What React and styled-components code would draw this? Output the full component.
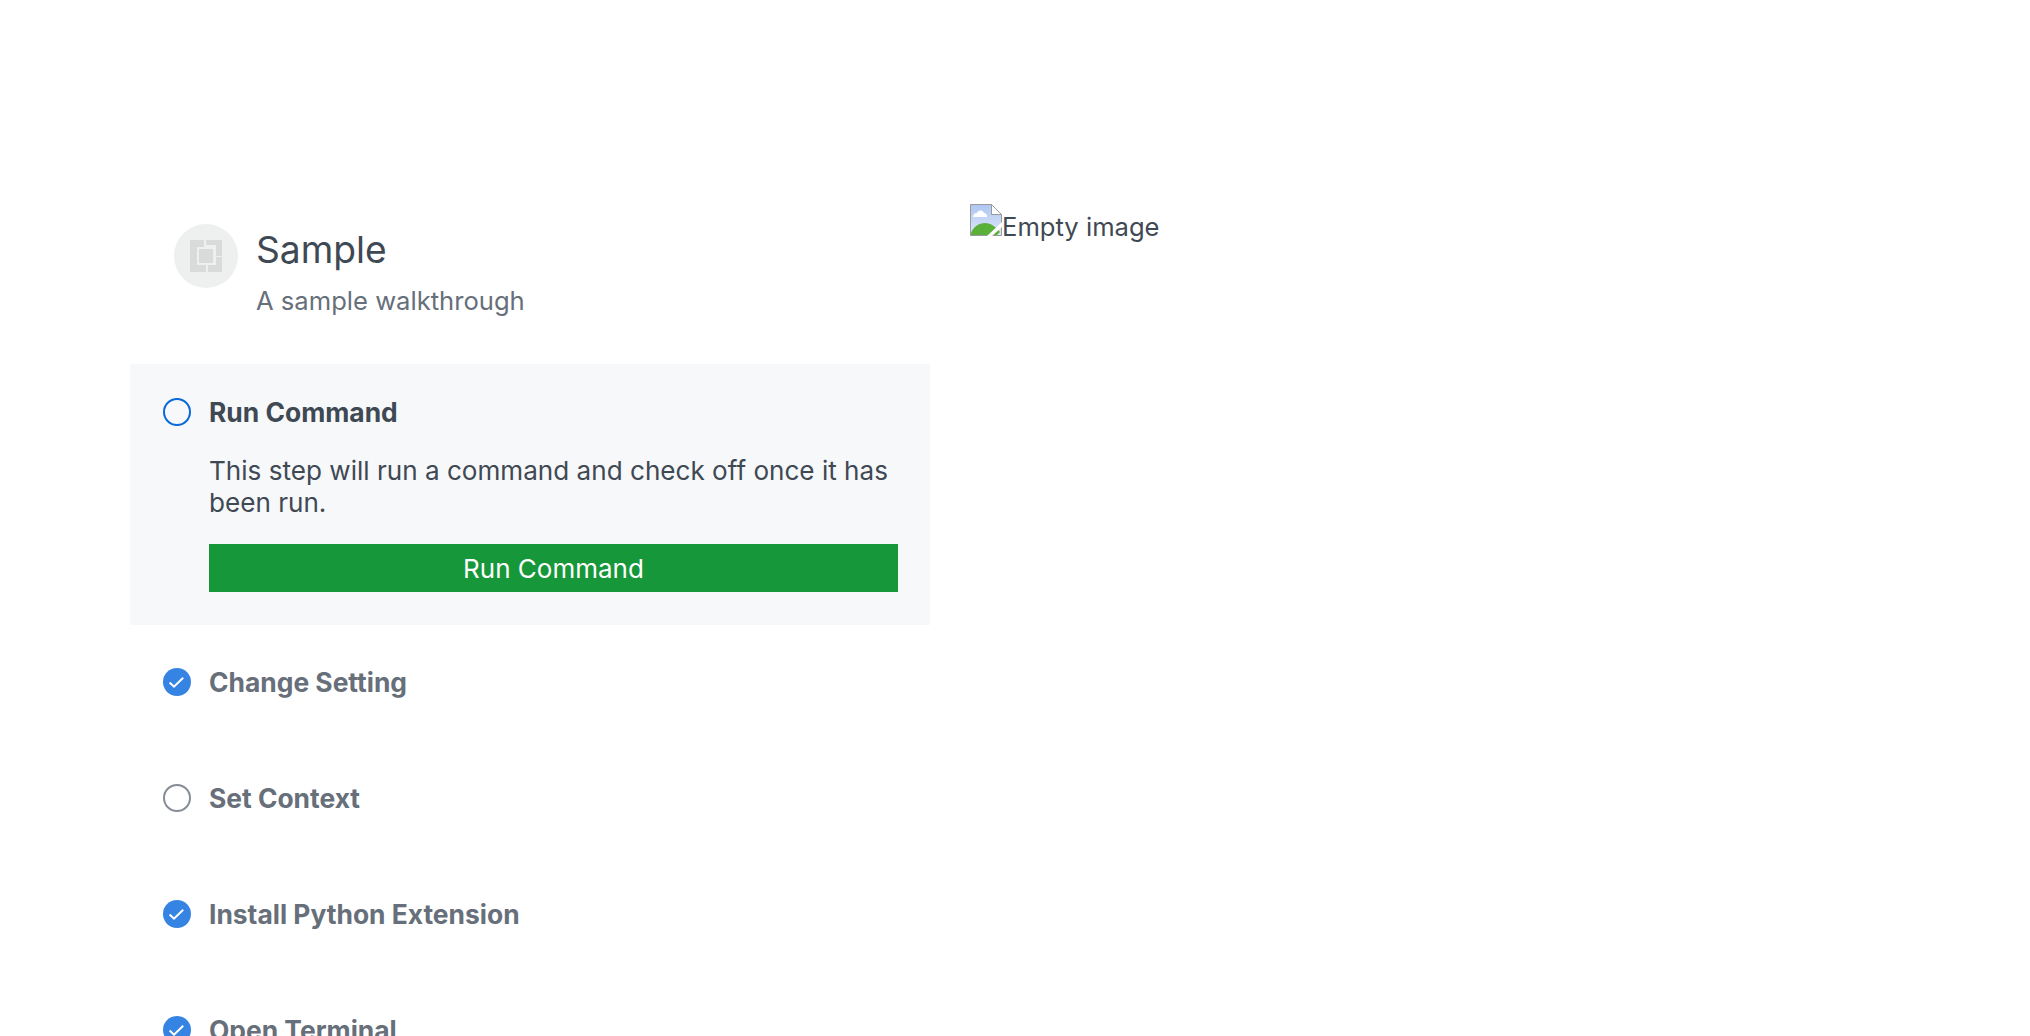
import styled, { createGlobalStyle } from "styled-components";

const GlobalStyle = createGlobalStyle`
  html, body {
    margin: 0;
    padding: 0;
    height: 100%;
    overflow: hidden;
    background: #ffffff;
  }
  body {
    font-family: Inter, "Liberation Sans", sans-serif;
    color: #3f4954;
  }
`;

const Page = styled.div`
  display: flex;
  align-items: flex-start;
  gap: 40px;
  width: 2030px;
  height: 1036px;
  padding: 204px 0 0 130px;
  box-sizing: border-box;
  overflow: hidden;
`;

const Sidebar = styled.div`
  display: flex;
  flex-direction: column;
  flex: none;
  width: 800px;
`;

const Header = styled.div`
  display: flex;
  flex: none;
  gap: 18px;
  padding: 20px 0 0 44px;
  height: 160px;
  box-sizing: border-box;
`;

const LogoCircle = styled.div`
  display: flex;
  align-items: center;
  justify-content: center;
  flex: none;
  width: 64px;
  height: 64px;
  border-radius: 50%;
  background: #eeefef;
`;

const HeaderText = styled.div`
  display: flex;
  flex-direction: column;
`;

const Title = styled.div`
  font-size: 37.2px;
  line-height: 46px;
  margin-top: 3px;
  color: #3f4954;
`;

const Subtitle = styled.div`
  font-size: 25.6px;
  line-height: 32px;
  margin-top: 12px;
  color: #666f7a;
`;

const Step = styled.div`
  display: flex;
  flex-direction: column;
  flex: none;
  padding: ${(p) => (p.$active ? "32px 32px 33px 33px" : "41px 32px 43px 33px")};
  background: ${(p) => (p.$active ? "#f7f8fa" : "transparent")};
`;

const StepHead = styled.div`
  display: flex;
  align-items: center;
  gap: 18px;
  height: 32px;
  margin-bottom: ${(p) => (p.$active ? "27px" : "0")};
`;

const StepTitle = styled.div`
  font-size: 26.4px;
  font-weight: 700;
  line-height: 32px;
  color: ${(p) => (p.$active ? "#3f4954" : "#666f7a")};
`;

const StepBody = styled.div`
  padding-left: 46px;
`;

const Description = styled.div`
  font-size: 26.1px;
  line-height: 32px;
  color: #3f4954;
`;

const RunButton = styled.button`
  display: block;
  width: 689px;
  height: 48px;
  margin-top: 25px;
  padding: 0;
  border: 0;
  background: #16973a;
  color: #ffffff;
  font-family: inherit;
  font-size: 26px;
`;

const Preview = styled.div`
  font-size: 25.6px;
  line-height: 32px;
  color: #3f4954;
  white-space: nowrap;

  svg {
    vertical-align: baseline;
  }
`;

const steps = [
  { title: "Change Setting", done: true },
  { title: "Set Context", done: false },
  { title: "Install Python Extension", done: true },
  { title: "Open Terminal", done: true },
];

function StepIcon({ done, active }) {
  if (done) {
    return (
      <svg width="28" height="28" viewBox="0 0 28 28" style={{ flex: "none" }}>
        <circle cx="14" cy="14" r="14" fill="#3584e4" />
        <path d="M6.6 14.6l4.4 4.1 9.2-9" fill="none" stroke="#fff" strokeWidth="2" />
      </svg>
    );
  }
  return (
    <svg width="28" height="28" viewBox="0 0 28 28" style={{ flex: "none" }}>
      <circle
        cx="14"
        cy="14"
        r="13"
        fill="none"
        stroke={active ? "#0969da" : "#868c96"}
        strokeWidth="2"
      />
    </svg>
  );
}

function LogoIcon() {
  return (
    <svg width="32" height="32" viewBox="0 0 32 32">
      <path
        fill="#d9dbdb"
        d="M0 0h14v7H7v18h9v7H0zM16 0h16v16h-6V5H16zM26 17h6v15H18v-7h8z"
      />
      <path fill="#d9dbdb" d="M9 9h14v14H9z" />
    </svg>
  );
}

function BrokenImage() {
  return (
    <svg width="32" height="32" viewBox="0 0 32 32">
      <defs>
        <linearGradient id="sky" x1="0" y1="0" x2="0" y2="1">
          <stop offset="0" stopColor="#aec6f2" />
          <stop offset="1" stopColor="#dfe8fa" />
        </linearGradient>
      </defs>
      <path d="M.5.5h21l10 10v21H.5z" fill="url(#sky)" stroke="#9a9a9a" />
      <path d="M21.5.5v10h10z" fill="#fff" stroke="#9a9a9a" />
      <path d="M3 13c0-2.500 2-4 4-4 1-3.500 6-3.500 7 0 2 0 3 1.500 3 4z" fill="#fff" />
      <path d="M1 31v-2c2-6 8-10 14-10 6 0 11 4 15 9l-3 3z" fill="#5bb03a" />
      <path d="M32 18L17 32h5l10-9z" fill="#fff" />
    </svg>
  );
}

export default function App() {
  return (
    <Page>
      <GlobalStyle />
      <Sidebar>
        <Header>
          <LogoCircle>
            <LogoIcon />
          </LogoCircle>
          <HeaderText>
            <Title>Sample</Title>
            <Subtitle>A sample walkthrough</Subtitle>
          </HeaderText>
        </Header>
        <Step $active>
          <StepHead $active>
            <StepIcon active />
            <StepTitle $active>Run Command</StepTitle>
          </StepHead>
          <StepBody>
            <Description>
              This step will run a command and check off once it has been run.
            </Description>
            <RunButton>Run Command</RunButton>
          </StepBody>
        </Step>
        {steps.map((s) => (
          <Step key={s.title}>
            <StepHead>
              <StepIcon done={s.done} />
              <StepTitle>{s.title}</StepTitle>
            </StepHead>
          </Step>
        ))}
      </Sidebar>
      <Preview>
        <BrokenImage />
        Empty image
      </Preview>
    </Page>
  );
}
